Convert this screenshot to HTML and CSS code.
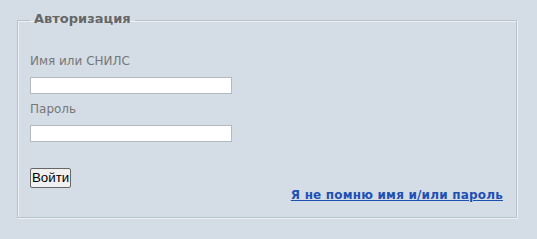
FILE: index.html
```html
<!DOCTYPE html>
<html lang="ru">
<head>
<meta charset="utf-8">
<link rel="stylesheet" href="styles.css">
</head>
<body>
<form class="login">
  <fieldset class="box">
    <legend class="box-title">Авторизация</legend>
    <label class="field-label" for="user">Имя или СНИЛС</label>
    <input class="field-input" id="user" type="text">
    <label class="field-label" for="pass">Пароль</label>
    <input class="field-input" id="pass" type="password">
    <div class="actions">
      <button class="submit" type="button">Войти</button>
    </div>
    <div class="forgot-row">
      <a class="forgot" href="#">Я не помню имя и/или пароль</a>
    </div>
  </fieldset>
</form>
</body>
</html>
```
FILE: styles.css
```css
html, body {
  margin: 0;
  padding: 0;
  background: #d4dde6;
}
body {
  font-family: "DejaVu Sans", Verdana, sans-serif;
  width: 537px;
  height: 239px;
  overflow: hidden;
}
.login {
  padding: 0 20px 0 17px;
  margin: 0;
}
.box {
  margin: 11px 0 0 0;
  padding: 24px 13px 14px 12px;
  border: 1px solid #b9c3cd;
  box-shadow: inset 1px 1px 0 #edf1f5, 1px 1px 0 #edf1f5;
  display: flex;
  flex-direction: column;
  align-items: flex-start;
  min-width: 0;
}
.box-title {
  font-weight: bold;
  font-size: 13px;
  color: #666;
  padding: 0 4px 4px 4px;
  line-height: 15px;
}
.field-label {
  display: block;
  font-size: 12px;
  color: #777;
  line-height: 15px;
  margin: 0 0 8px 0;
}
.field-input {
  display: block;
  box-sizing: border-box;
  width: 202px;
  height: 17px;
  margin: 0 0 8px 0;
  padding: 0 2px;
  border: 1px solid #b4b9be;
  background: #fff;
  border-radius: 0;
  outline: none;
}
.actions {
  margin-top: 17px;
}
.submit {
  font-family: "Liberation Sans", Arial, sans-serif;
  font-size: 13.3px;
  color: #000;
  background: #f0f0f0;
  border: 1px solid #666;
  border-radius: 2px;
  height: 20px;
  padding: 0 1px;
  line-height: 16px;
}
.forgot-row {
  align-self: stretch;
  text-align: right;
  margin-top: -4px;
}
.forgot {
  font-size: 12px;
  font-weight: bold;
  color: #1e50b4;
  text-decoration: underline;
  letter-spacing: 0.2px;
  line-height: 15px;
}
```
